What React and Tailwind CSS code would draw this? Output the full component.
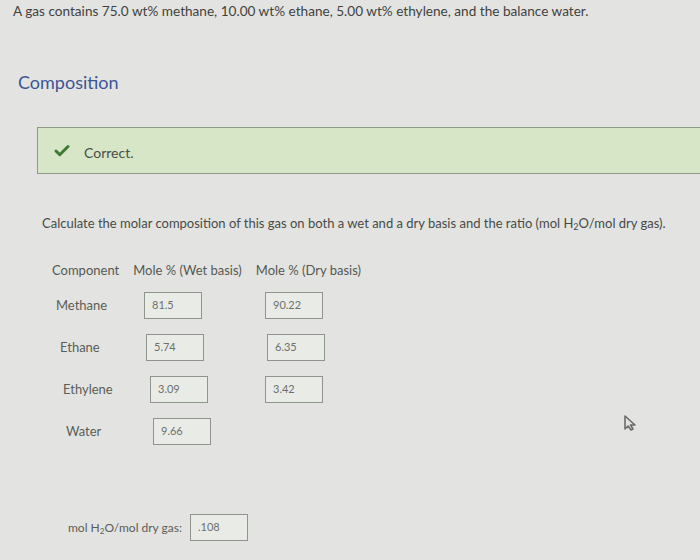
import { Check } from "lucide-react";

const rows = [
  { name: "Methane", wet: "81.5", dry: "90.22", pad: "pl-[56px]", wetX: "ml-[32px]", dryX: "ml-[63px]" },
  { name: "Ethane", wet: "5.74", dry: "6.35", pad: "pl-[60px]", wetX: "ml-[30px]", dryX: "ml-[63px]" },
  { name: "Ethylene", wet: "3.09", dry: "3.42", pad: "pl-[63px]", wetX: "ml-[31px]", dryX: "ml-[57px]" },
  { name: "Water", wet: "9.66", dry: null, pad: "pl-[66px]", wetX: "ml-[31px]", dryX: "" },
];

function Field({ value, className }) {
  return (
    <div
      className={`w-[58px] h-[27px] border border-[#8f958c] bg-[#e9ebe7] flex items-center pl-[7px] text-[11px] text-[#6d716b] ${className}`}
    >
      {value}
    </div>
  );
}

export default function App() {
  return (
    <div
      className="w-[700px] h-[560px] overflow-hidden bg-[#e3e4e1] text-[#4e514d]"
      style={{ fontFamily: "Lato, 'Open Sans', sans-serif" }}
    >
      <p className="pl-[13px] mt-[1px] text-[13.6px] leading-[20px] text-[#3f423e]">
        A gas contains 75.0 wt% methane, 10.00 wt% ethane, 5.00 wt% ethylene, and the balance water.
      </p>

      <h2 className="pl-[18px] mt-[49px] text-[18px] leading-[24px] text-[#3b5696]">
        Composition
      </h2>

      <div className="ml-[37px] mt-[33px] h-[47px] border border-[#8d9a86] bg-[#d6e6c6] flex items-center pl-[15px] -mr-[4px]">
        <Check size={18} strokeWidth={4} className="text-[#3f7a34]" />
        <span className="ml-[13px] mt-[3px] text-[14px] text-[#4a4d48]">Correct.</span>
      </div>

      <p className="pl-[42px] mt-[40px] text-[13px] leading-[18px] text-[#474a46]">
        Calculate the molar composition of this gas on both a wet and a dry basis and the ratio (mol H
        <sub className="text-[9px]">2</sub>O/mol dry gas).
      </p>

      <div className="flex pl-[52px] mt-[29px] text-[13px] leading-[18px] text-[#555853]">
        <span>Component</span>
        <span className="ml-[14px]">Mole % (Wet basis)</span>
        <span className="ml-[14px]">Mole % (Dry basis)</span>
      </div>

      <div className="flex flex-col gap-[15px] mt-[13px]">
        {rows.map((row) => (
          <div key={row.name} className={`flex items-center h-[27px] ${row.pad}`}>
            <span className="w-[56px] text-[13px] text-[#5a5d58]">{row.name}</span>
            <Field value={row.wet} className={row.wetX} />
            {row.dry && <Field value={row.dry} className={row.dryX} />}
          </div>
        ))}
      </div>

      <div className="flex items-center pl-[68px] mt-[69px] text-[12px] text-[#5a5d58]">
        <span>
          mol H<sub className="text-[8px]">2</sub>O/mol dry gas:
        </span>
        <Field value=".108" className="ml-[8px] w-[56px] h-[26px]" />
      </div>

      <svg
        className="absolute left-[622px] top-[414px]"
        width="16"
        height="18"
        viewBox="0 0 16 18"
      >
        <path
          d="M3 2 L3 15 L6 12 L9 16 L11 15 L8.5 11 L13 11 Z"
          fill="#e3e4e1"
          stroke="#6a6c69"
          strokeWidth="1.6"
          strokeLinejoin="round"
        />
      </svg>
    </div>
  );
}
